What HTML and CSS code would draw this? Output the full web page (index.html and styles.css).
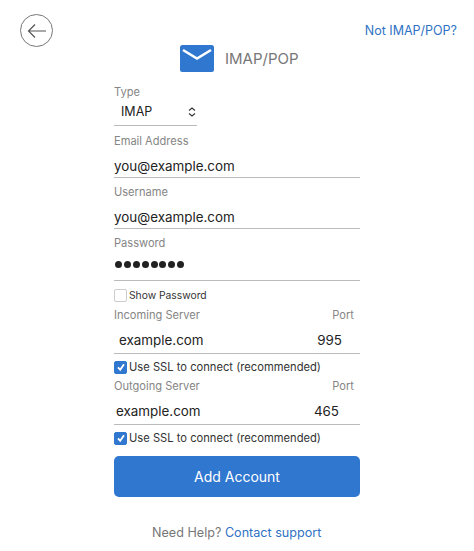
FILE: index.html
```html
<!DOCTYPE html>
<html lang="en">
<head>
  <meta charset="UTF-8">
  <meta name="viewport" content="width=device-width, initial-scale=1.0">
  <title>IMAP/POP</title>
  <link rel="stylesheet" href="styles.css">
</head>
<body>
  <div class="top-bar">
    <button class="back-button" aria-label="Back">
      <svg width="20" height="16" viewBox="0 0 20 16" fill="none" stroke="#555" stroke-width="1.2">
        <path d="M19 8H1.5M8 1.5L1.5 8L8 14.5"/>
      </svg>
    </button>
    <a class="link not-imap" href="#">Not IMAP/POP?</a>
  </div>

  <div class="title-row">
    <svg class="mail-icon" width="34" height="27" viewBox="0 0 34 27">
      <rect width="34" height="27" rx="2.5" fill="#2f77cf"/>
      <path d="M3 5L17 13.5L31 5" fill="none" stroke="#fff" stroke-width="2.6"/>
    </svg>
    <span class="title">IMAP/POP</span>
  </div>

  <form class="form">
    <label class="label type-label">Type</label>
    <div class="select-field">
      <span>IMAP</span>
      <svg width="8" height="10" viewBox="0 0 8 10" fill="none" stroke="#333" stroke-width="1.1">
        <path d="M1 3.5L4 1L7 3.5M1 6.5L4 9L7 6.5"/>
      </svg>
    </div>

    <label class="label email-label">Email Address</label>
    <div class="field">you@example.com</div>

    <label class="label user-label">Username</label>
    <div class="field">you@example.com</div>

    <label class="label pass-label">Password</label>
    <div class="field pass-field">
      <span class="dot"></span><span class="dot"></span><span class="dot"></span><span class="dot"></span>
      <span class="dot"></span><span class="dot"></span><span class="dot"></span><span class="dot"></span>
    </div>

    <div class="check-row show-pass">
      <span class="checkbox"></span>
      <span class="show-text">Show Password</span>
    </div>

    <div class="label-row incoming-labels">
      <span class="label">Incoming Server</span>
      <span class="label">Port</span>
    </div>
    <div class="field server-field incoming-field">
      <span class="server-name">example.com</span>
      <span class="port">995</span>
    </div>

    <div class="check-row ssl-row">
      <span class="checkbox checked">
        <svg width="10" height="10" viewBox="0 0 10 10" fill="none" stroke="#fff" stroke-width="1.8"><path d="M2 5.3L4.2 7.8L8 2.2"/></svg>
      </span>
      <span>Use SSL to connect (recommended)</span>
    </div>

    <div class="label-row outgoing-labels">
      <span class="label">Outgoing Server</span>
      <span class="label">Port</span>
    </div>
    <div class="field server-field outgoing-field">
      <span class="server-name">example.com</span>
      <span class="port">465</span>
    </div>

    <div class="check-row ssl-row">
      <span class="checkbox checked">
        <svg width="10" height="10" viewBox="0 0 10 10" fill="none" stroke="#fff" stroke-width="1.8"><path d="M2 5.3L4.2 7.8L8 2.2"/></svg>
      </span>
      <span>Use SSL to connect (recommended)</span>
    </div>

    <button class="add-button" type="button">Add Account</button>
  </form>

  <p class="help">Need Help? <a class="link" href="#">Contact support</a></p>
</body>
</html>
```

FILE: styles.css
```css
html, body {
  height: 100%;
}
body {
  margin: 0;
  padding: 14px 17px 0 20px;
  box-sizing: border-box;
  overflow: hidden;
  background: #fff;
  color: #222;
  font-family: Inter, "Liberation Sans", sans-serif;
}
.link {
  color: #2f72c4;
  text-decoration: none;
}
.top-bar {
  display: flex;
  justify-content: space-between;
  align-items: center;
  height: 33px;
}
.back-button {
  display: flex;
  align-items: center;
  justify-content: center;
  width: 33px;
  height: 33px;
  padding: 0;
  border: 1px solid #777;
  border-radius: 50%;
  background: #fff;
}
.not-imap {
  font-size: 12.5px;
}
.title-row {
  display: flex;
  align-items: center;
  gap: 11px;
  margin: -2px 0 0 160px;
  height: 27px;
}
.title {
  font-size: 15px;
  color: #777;
}
.form {
  display: flex;
  flex-direction: column;
  width: 246px;
  margin: 13px 0 0 94px;
}
.label {
  font-size: 11.1px;
  line-height: 14px;
  color: #858585;
}
.select-field {
  display: flex;
  justify-content: space-between;
  align-items: center;
  width: 83px;
  height: 26px;
  box-sizing: border-box;
  padding: 0 1px 2px 7px;
  margin-top: 1px;
  border-bottom: 1px solid #bbb;
  font-size: 12.5px;
}
.email-label {
  margin-top: 8px;
}
.user-label, .pass-label {
  margin-top: 7px;
}
.field {
  display: flex;
  align-items: center;
  box-sizing: border-box;
  height: 30px;
  padding-top: 6px;
  border-bottom: 1px solid #bbb;
  font-size: 13.4px;
}
.pass-field {
  height: 31px;
  gap: 1.9px;
  padding: 0 0 1px 1px;
}
.dot {
  width: 7px;
  height: 7px;
  border-radius: 50%;
  background: #222;
}
.check-row {
  display: flex;
  align-items: center;
  gap: 2px;
  height: 14px;
  font-size: 11.2px;
  color: #333;
}
.show-text {
  font-size: 10.3px;
}
.show-pass {
  margin-top: 7px;
}
.checkbox {
  display: flex;
  align-items: center;
  justify-content: center;
  width: 11px;
  height: 11px;
  border: 1px solid #ccc;
  border-radius: 2px;
  background: #fff;
}
.checkbox.checked {
  border-color: #2f77cf;
  background: #2f77cf;
}
.label-row {
  display: flex;
  justify-content: space-between;
  padding-right: 6px;
}
.incoming-labels {
  margin-top: 6px;
}
.outgoing-labels {
  margin-top: 5px;
}
.server-field {
  justify-content: space-between;
}
.incoming-field {
  height: 32px;
  padding: 5px 18px 0 5px;
}
.outgoing-field {
  height: 32px;
  padding: 5px 21px 0 2px;
}
.ssl-row {
  margin-top: 6px;
}
.add-button {
  width: 246px;
  height: 41px;
  margin-top: 11px;
  border: none;
  border-radius: 5px;
  background: #2f77cf;
  color: #fff;
  font-family: inherit;
  font-size: 14px;
}
.help {
  margin: 28px 0 0 132px;
  font-size: 12.6px;
  line-height: 16px;
  color: #777;
}
```
